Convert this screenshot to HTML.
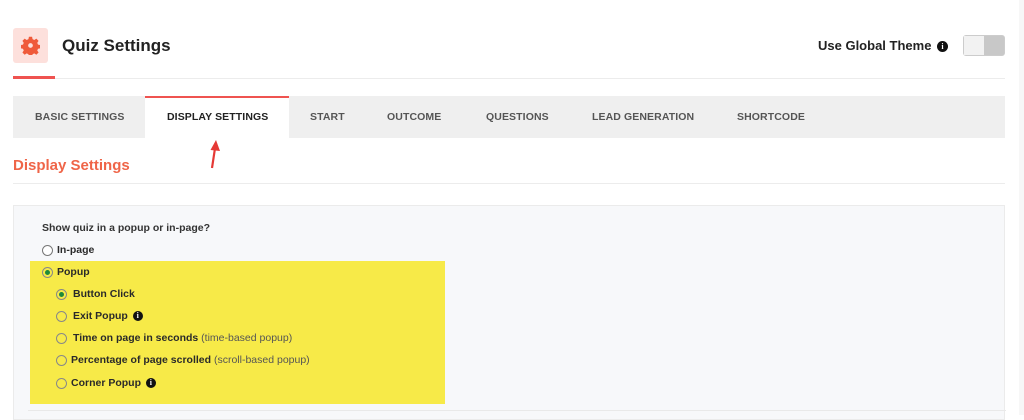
<!DOCTYPE html>
<html><head><meta charset="utf-8"><style>
*{margin:0;padding:0;box-sizing:border-box}
body{width:1024px;height:415px;overflow:hidden;background:#fff;font-family:"Liberation Sans",sans-serif;position:relative;color:#222}
.a{position:absolute}
.tab{position:absolute;top:111px;font-size:10.5px;font-weight:bold;color:#555;letter-spacing:0.1px}
.t{position:absolute;font-size:10.5px;font-weight:bold;color:#2a2a2a;white-space:nowrap}
.r{position:absolute;width:11px;height:11px;border-radius:50%;border:1px solid #777;background:#fff}
.r.y{background:#f7ea48;border-color:#888}
.r.on::after{content:"";position:absolute;left:2px;top:2px;width:5px;height:5px;border-radius:50%;background:#1e8a3a}
.n{font-weight:normal;color:#555}
.i{display:inline-block;width:10px;height:10px;border-radius:50%;background:#111;color:#fff;font-size:8px;text-align:center;line-height:10px;font-weight:bold;font-family:"Liberation Serif",serif;vertical-align:1px;margin-left:2px}
</style></head><body>
<div class="a" style="left:1019px;top:0;width:5px;height:415px;background:#f7f7f7"></div>
<div class="a" style="left:13px;top:28px;width:35px;height:35px;background:#fde0dc;border-radius:3px"></div>
<svg class="a" style="left:21px;top:36px" width="19" height="19" viewBox="0 0 24 24"><path fill="#ef5a3a" d="M10 1h4l.6 3 2.2 1 2.6-1.7 2.8 2.8-1.7 2.6 1 2.2 3 .6v4l-3 .6-1 2.2 1.7 2.6-2.8 2.8-2.6-1.7-2.2 1-.6 3h-4l-.6-3-2.2-1-2.6 1.7-2.8-2.8 1.7-2.6-1-2.2-3-.6v-4l3-.6 1-2.2-1.7-2.6 2.8-2.8 2.6 1.7 2.2-1zM12 9a3 3 0 100 6 3 3 0 000-6z"/></svg>
<div class="a" style="left:62px;top:36px;font-size:17px;font-weight:bold;color:#222">Quiz Settings</div>
<div class="a" style="left:818px;top:38px;font-size:13px;font-weight:bold;color:#222">Use Global Theme <span class="i" style="width:11px;height:11px;line-height:11px">i</span></div>
<div class="a" style="left:963px;top:35px;width:42px;height:21px;border:1px solid #ccc;border-radius:3px;background:#c8c8c8"><div style="width:20px;height:19px;background:#f2f2f2"></div></div>
<div class="a" style="left:13px;top:78px;width:992px;height:1px;background:#ececec"></div>
<div class="a" style="left:13px;top:76px;width:42px;height:3px;background:#ef5350"></div>
<div class="a" style="left:13px;top:96px;width:992px;height:42px;background:#efefef"></div>
<div class="a" style="left:145px;top:96px;width:144px;height:42px;background:#fff;border-top:2px solid #ef5350"></div>
<div class="tab" style="left:35px">BASIC SETTINGS</div>
<div class="tab" style="left:167px;color:#222">DISPLAY SETTINGS</div>
<div class="tab" style="left:310px">START</div>
<div class="tab" style="left:387px">OUTCOME</div>
<div class="tab" style="left:486px">QUESTIONS</div>
<div class="tab" style="left:592px">LEAD GENERATION</div>
<div class="tab" style="left:737px">SHORTCODE</div>
<svg class="a" style="left:200px;top:136px" width="30" height="36"><path d="M12 32 L15.5 9" stroke="#e53935" stroke-width="2.2" fill="none"/><path d="M10.5 14 L16 4 L20 15 Z" fill="#e53935"/></svg>
<div class="a" style="left:13px;top:157px;font-size:15px;font-weight:bold;color:#ef6548">Display Settings</div>
<div class="a" style="left:13px;top:183px;width:992px;height:1px;background:#ececec"></div>
<div class="a" style="left:13px;top:205px;width:992px;height:215px;background:#f7f8fa;border:1px solid #ebebeb"></div>
<div class="a" style="left:30px;top:261px;width:415px;height:143px;background:#f7ea48"></div>
<div class="a" style="left:28px;top:410px;width:978px;height:1px;background:#e9e9e9"></div>
<div class="t" style="left:42px;top:222px;font-weight:bold;color:#333">Show quiz in a popup or in-page?</div>
<div class="r" style="left:42px;top:245px"></div><div class="t" style="left:57px;top:244px">In-page</div>
<div class="r y on" style="left:42px;top:267px"></div><div class="t" style="left:57px;top:266px">Popup</div>
<div class="r y on" style="left:56px;top:289px"></div><div class="t" style="left:73px;top:288px">Button Click</div>
<div class="r y" style="left:56px;top:311px"></div><div class="t" style="left:73px;top:310px">Exit Popup <span class="i">i</span></div>
<div class="r y" style="left:56px;top:333px"></div><div class="t" style="left:73px;top:332px">Time on page in seconds <span class="n">(time-based popup)</span></div>
<div class="r y" style="left:56px;top:355px"></div><div class="t" style="left:71px;top:354px">Percentage of page scrolled <span class="n">(scroll-based popup)</span></div>
<div class="r y" style="left:56px;top:378px"></div><div class="t" style="left:71px;top:377px">Corner Popup <span class="i">i</span></div>
</body></html>
